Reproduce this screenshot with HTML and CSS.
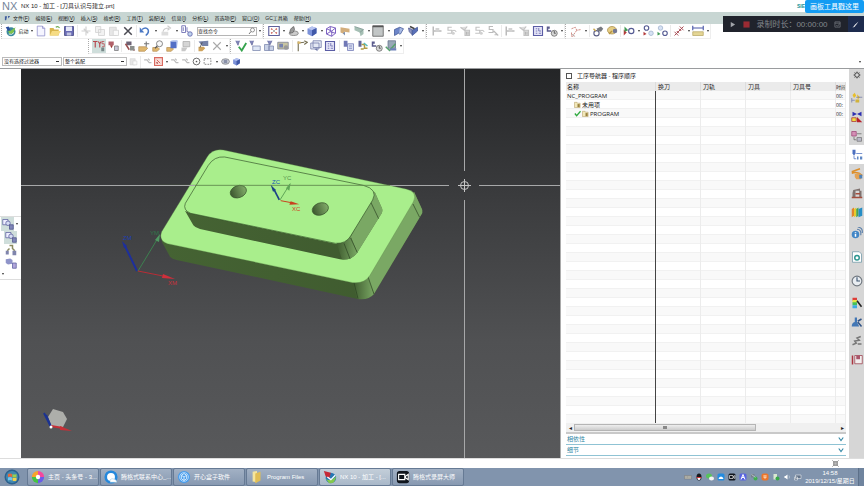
FILE: index.html
```html
<!DOCTYPE html>
<html lang="zh-CN">
<head>
  <meta charset="UTF-8">
  <meta name="viewport" content="width=device-width, initial-scale=1.0">
  <title>NX 10 - 加工 - [刀具认识与建立.prt]</title>
  <link rel="stylesheet" href="styles.css">
</head>
<body>
  <svg class="defs" aria-hidden="true">
    <symbol id="i-start" viewBox="0 0 16 16"><circle cx="8" cy="9" r="6" fill="#3d8a9c"/><path d="M3 5l4 3 7-5-3 8-5 1z" fill="#7fc34a"/><path d="M1 3l4-1 2 5-3 1z" fill="#2c4f9e"/><path d="M5 12q4 2 7-2" stroke="#fff" fill="none"/></symbol>
    <symbol id="i-new" viewBox="0 0 16 16"><path d="M3 1.500h7l3 3v10H3z" fill="#f5f5ff" stroke="#8c8cc8"/><path d="M10 1.500v3h3" fill="none" stroke="#8c8cc8"/></symbol>
    <symbol id="i-open" viewBox="0 0 16 16"><path d="M1 4h5l1 2h6v8H1z" fill="#d8b54e"/><path d="M4 8h12l-4 6H1z" fill="#f6dc84"/><path d="M9 3q3-2 5 1" stroke="#6aa84f" fill="none" stroke-width="1.500"/></symbol>
    <symbol id="i-save" viewBox="0 0 16 16"><path d="M2 2h12v12H2z" fill="#6a6cb5" stroke="#40427f"/><path d="M4 2h8v6H4z" fill="#e8eaf8"/><path d="M5 10h6v4H5z" fill="#c0c3e0"/></symbol>
    <symbol id="i-cut" viewBox="0 0 16 16"><path d="M8 2v12M2 8h12M5 5l6 6" stroke="#d0d0d0" stroke-width="1.500" fill="none"/></symbol>
    <symbol id="i-copy" viewBox="0 0 16 16"><path d="M2 2h7v8H2zM6 6h8v8H6z" fill="#f2f2f2" stroke="#d0d0d0"/></symbol>
    <symbol id="i-paste" viewBox="0 0 16 16"><path d="M2 3h9v11H2z" fill="#e6e6e6" stroke="#d0d0d0"/><path d="M7 7h7v7H7z" fill="#fafafa" stroke="#d0d0d0"/></symbol>
    <symbol id="i-x" viewBox="0 0 16 16"><path d="M3 3l10 10M13 3L3 13" stroke="#4a4a52" stroke-width="2"/></symbol>
    <symbol id="i-xg" viewBox="0 0 16 16"><path d="M3 3l10 10M13 3L3 13" stroke="#a9a9a9" stroke-width="1.500"/></symbol>
    <symbol id="i-undo" viewBox="0 0 16 16"><path d="M4 6q5-4 8 0 2 4-3 8" stroke="#4a78c4" stroke-width="2" fill="none"/><path d="M1 3v7h6z" fill="#4a78c4"/></symbol>
    <symbol id="i-redo" viewBox="0 0 16 16"><path d="M2 9h9v5H2z" fill="#ddd"/><path d="M4 9q1-5 8-5M10 1l4 3-4 3" stroke="#ccc" fill="none" stroke-width="1.500"/></symbol>
    <symbol id="i-info" viewBox="0 0 16 16"><path d="M1 1h5v9H1z" fill="#fff" stroke="#5557a5"/><path d="M3 3v5M8 3v6h2" stroke="#5557a5" fill="none"/><circle cx="12" cy="12" r="3" fill="#bfd4ee" stroke="#5557a5"/></symbol>
    <symbol id="i-fit" viewBox="0 0 16 16"><path d="M1 2h14v12H1z" fill="#fff" stroke="#60619c" stroke-width="1.500"/><path d="M4 5l2 1M12 5l-2 1M4 11l2-1M12 11l-2-1" stroke="#c0392b" stroke-width="1.500"/><path d="M7 7h2v2H7z" fill="#777"/></symbol>
    <symbol id="i-pan" viewBox="0 0 16 16"><ellipse cx="9" cy="11" rx="6" ry="3" fill="#ccc" stroke="#777"/><path d="M4 11q-1-6 5-9l1 4-2 4z" fill="#999" stroke="#666"/></symbol>
    <symbol id="i-cube" viewBox="0 0 16 16"><path d="M2 5l6-3 6 2v7l-6 4-6-3z" fill="#7c92d9"/><path d="M2 5l6-3 6 2-6 3z" fill="#b7c4f0"/><path d="M8 7l6-3v7l-6 4z" fill="#4159a8"/></symbol>
    <symbol id="i-wire" viewBox="0 0 16 16"><path d="M2 5l5-3 7 2v7l-5 4-7-3zM2 5l7 3 5-4M9 8v7M7 2v7l-5 3M7 9l7 2" fill="none" stroke="#7a5fc0" stroke-width="1.300"/></symbol>
    <symbol id="i-wall" viewBox="0 0 16 16"><path d="M2 3l12 2v5l-7-1v3l-5-2z" fill="#d3ae7c"/><path d="M8 9v5l-3-3z" fill="#7c8fb0"/></symbol>
    <symbol id="i-wall2" viewBox="0 0 16 16"><path d="M2 2l12 4v6l-4 3-1-5-7-3z" fill="#a5bfb4"/><path d="M2 2l12 4-5 4" fill="none" stroke="#7b948f"/></symbol>
    <symbol id="i-sheet" viewBox="0 0 16 16"><path d="M1 1h14v14H1z" fill="#c2c6c6" stroke="#555"/><path d="M1 2h14" stroke="#555" stroke-width="2"/></symbol>
    <symbol id="i-face" viewBox="0 0 16 16"><path d="M2 6l7-3v7l-7 4z" fill="#6d86c9" stroke="#3f5596"/><path d="M9 3l5 2-4 7-2 0" fill="#a9bbe5" stroke="#3f5596"/></symbol>
    <symbol id="i-face2" viewBox="0 0 16 16"><path d="M2 4l5 2v7L3 9z" fill="#8b93c0" stroke="#4e568f"/><path d="M7 7l7-4v5l-7 6z" fill="#5a70b8" stroke="#3f5596"/><path d="M4 2l6 3" stroke="#444" stroke-width="2"/></symbol>
    <symbol id="i-g1" viewBox="0 0 16 16"><path d="M3 2v12M3 8h11" stroke="#bbb" stroke-width="2"/><path d="M6 4h5v5H6z" fill="#d3d3d3"/></symbol>
    <symbol id="i-g2" viewBox="0 0 16 16"><path d="M9 3H4v4h5v4H3M9 9q3-4 6 0" stroke="#c2c2c2" stroke-width="1.500" fill="none"/><circle cx="11" cy="11" r="2" fill="#d0d0d0"/></symbol>
    <symbol id="i-g3" viewBox="0 0 16 16"><path d="M2 3l5 4 4-5M8 7h6v7H8z" stroke="#c2c2c2" stroke-width="1.500" fill="#ddd"/><path d="M10 9v4M12 9v4" stroke="#aaa"/></symbol>
    <symbol id="i-g4" viewBox="0 0 16 16"><path d="M8 2H3v4h5v4H2M9 8l6 6M10 13h5" stroke="#bbb" stroke-width="1.500" fill="none"/></symbol>
    <symbol id="i-list" viewBox="0 0 16 16"><path d="M2 2h12v12H2z" fill="#e4e4f7" stroke="#5b5da5" stroke-width="1.500"/><path d="M5 5h2M5 8h2M5 11h2M9 4v4h3M9 11h3" stroke="#5b5da5" fill="none"/></symbol>
    <symbol id="i-clock" viewBox="0 0 16 16"><path d="M2 2v6h5M4 2v3" stroke="#5a5b8c" stroke-width="2" fill="none"/><circle cx="11" cy="11" r="4" fill="#d5d5d5" stroke="#666"/><path d="M11 8v3h2" stroke="#333" fill="none"/></symbol>
    <symbol id="i-csys" viewBox="0 0 16 16"><path d="M2 5l5-2 2 4 6-1M9 7l-5 7M2 10v5h4" fill="none" stroke="#c36b62" stroke-dasharray="3 1"/><path d="M3 12l3 3" stroke="#888"/></symbol>
    <symbol id="i-link" viewBox="0 0 16 16"><circle cx="6" cy="11" r="3.500" fill="#fff" stroke="#5d6087" stroke-width="1.500"/><path d="M6 5l6-3 3 3-3 4-4-1z" fill="#777a80"/><path d="M2 5l3 3" stroke="#c9a94c" stroke-width="2"/></symbol>
    <symbol id="i-palette" viewBox="0 0 16 16"><ellipse cx="8" cy="7" rx="6" ry="5" fill="#e5cd84" stroke="#a98e49"/><circle cx="12" cy="8" r="3" fill="#747894"/><path d="M4 12l4-4" stroke="#b59242" stroke-width="2"/></symbol>
    <symbol id="i-move" viewBox="0 0 16 16"><path d="M1 6v8l4-4z" fill="#b43a3a"/><path d="M2 2l5 5-5 2z" fill="#419a55"/><circle cx="11" cy="8" r="3.500" fill="#fff" stroke="#545a92" stroke-width="1.500"/></symbol>
    <symbol id="i-move2" viewBox="0 0 16 16"><circle cx="6" cy="4" r="3" fill="#fff" stroke="#545a92" stroke-width="1.500"/><circle cx="12" cy="11" r="3" fill="#d7e2f4" stroke="#9fb2cc"/><path d="M2 9v5l4-2z" fill="#b43a3a"/></symbol>
    <symbol id="i-move3" viewBox="0 0 16 16"><circle cx="6" cy="4" r="3" fill="#d7e2f4" stroke="#9fb2cc"/><circle cx="12" cy="11" r="3" fill="#fff" stroke="#545a92" stroke-width="1.500"/><path d="M2 9v5l4-2z" fill="#419a55"/></symbol>
    <symbol id="i-measure" viewBox="0 0 16 16"><path d="M2 14L14 2M2 9l5 5M9 2l5 5M5 8l3 3M8 5l3 3" stroke="#a84a52" stroke-width="1.300"/></symbol>
    <symbol id="i-ruler" viewBox="0 0 16 16"><path d="M1 4h14M1 1v6M15 1v6" stroke="#4b57a8" stroke-width="1.500"/><path d="M1 9h14v5H1z" fill="#e4d695" stroke="#b8a866"/></symbol>
    <symbol id="i-tys" viewBox="0 0 16 16"><path d="M0 2h6M3 2v8M7 2l2 3 2-3M9 5v5" stroke="#b8454c" stroke-width="1.500" fill="none"/><path d="M15 2h-3v3h3v4h-3" stroke="#b8454c" fill="none"/><path d="M11 10h4v5h-4z" fill="#788"/></symbol>
    <symbol id="i-tool" viewBox="0 0 16 16"><path d="M2 2h7v5H2z" fill="#b0606a"/><path d="M4 7h4l-2 4z" fill="#933"/><path d="M10 8h5v6h-5z" fill="#c7c7d8" stroke="#777"/></symbol>
    <symbol id="i-tool2" viewBox="0 0 16 16"><path d="M3 2h7v5H3z" fill="#6d6274"/><path d="M2 5l5 8M9 9l5 5" stroke="#9a4f4f" stroke-width="2"/><path d="M8 8h6v6H8z" fill="#8c8f8c"/></symbol>
    <symbol id="i-hand" viewBox="0 0 16 16"><path d="M1 9h9l3 2-4 4H1z" fill="#dfb76e" stroke="#b8935a"/><path d="M8 5h7M11 2v7" stroke="#777" stroke-width="1.500"/></symbol>
    <symbol id="i-hand2" viewBox="0 0 16 16"><path d="M1 10h7l2 2-3 3H1z" fill="#dfb76e" stroke="#b8935a"/><circle cx="10" cy="5" r="4" fill="#f8f8f8" stroke="#666"/><path d="M7 8l-3 3" stroke="#555" stroke-width="1.500"/></symbol>
    <symbol id="i-hand3" viewBox="0 0 16 16"><path d="M1 10h7l2 2-3 3H1z" fill="#dfb76e" stroke="#b8935a"/><path d="M6 2h8v9H6z" fill="#536fc6"/><path d="M6 2l3-1h6l-1 9" fill="none" stroke="#8ea4e4"/></symbol>
    <symbol id="i-hand4" viewBox="0 0 16 16"><path d="M4 2h9v7H4z" fill="#d5d5d5" stroke="#aaa"/><path d="M2 10h8l-3 5H2z" fill="#c8c8c8"/></symbol>
    <symbol id="i-hand5" viewBox="0 0 16 16"><path d="M2 2l13-1v7H7z" fill="#7682a8"/><path d="M2 9h7l2 2-4 4H2z" fill="#cfa35c"/><path d="M7 3l-3 7" stroke="#444"/></symbol>
    <symbol id="i-ok" viewBox="0 0 16 16"><path d="M1 1l3 6 2-6" fill="#8388bb" stroke="#656b9f"/><path d="M5 9l4 5 6-10" fill="none" stroke="#35a34d" stroke-width="2.500"/></symbol>
    <symbol id="i-op" viewBox="0 0 16 16"><path d="M1 1l3 6 2-6" fill="#8388bb" stroke="#656b9f"/><path d="M5 8h10v6H5z" fill="#dfe7f5" stroke="#7b87ad"/></symbol>
    <symbol id="i-op2" viewBox="0 0 16 16"><path d="M6 1l3 6 3-6" fill="#8388bb" stroke="#656b9f"/><path d="M2 6h6v8H2zM8 8h6v6H8z" fill="#c8d1e6" stroke="#7b87ad"/></symbol>
    <symbol id="i-op3" viewBox="0 0 16 16"><path d="M1 3h14v9H1z" fill="#c7c4a2" stroke="#777b93"/><path d="M3 5h5v5H3z" fill="#7682b0"/><circle cx="12" cy="10" r="3" fill="#999"/></symbol>
    <symbol id="i-flag" viewBox="0 0 16 16"><path d="M3 15V2M3 4l8-1M11 1l4 2-4 3" stroke="#777155" fill="none" stroke-width="1.500"/><path d="M2 2h4v3H2z" fill="#d9b768"/></symbol>
    <symbol id="i-screen" viewBox="0 0 16 16"><path d="M4 1h11v9H4zM1 4h11v8H1z" fill="#e4e8f4" stroke="#7079a8"/><path d="M6 12l4 3v-4" fill="#7079a8"/></symbol>
    <symbol id="i-tree" viewBox="0 0 16 16"><path d="M1 1h5v8H1z" fill="#7078b6"/><path d="M6 5h8v9H6z" fill="#d8def0" stroke="#7078b6"/><path d="M8 8h4M8 11h4" stroke="#7078b6"/></symbol>
    <symbol id="i-tree2" viewBox="0 0 16 16"><path d="M2 1h4v8H2z" fill="#62679c"/><path d="M6 6h4v5h4M5 12h4" stroke="#b09a45" stroke-width="2" fill="none"/><path d="M9 4l5 4" stroke="#5bb" stroke-width="2"/></symbol>
    <symbol id="i-disk" viewBox="0 0 16 16"><path d="M4 1h10v10H4z" fill="#97a7b7" stroke="#67718c"/><path d="M1 9l5 5 8-9" fill="none" stroke="#57a06e" stroke-width="2"/><path d="M7 11h8v3H7z" fill="#6c80b9"/></symbol>
    <symbol id="i-snap" viewBox="0 0 16 16"><path d="M2 5h5l4 5h4M9 3l3 3" stroke="#bbb" stroke-width="2" fill="none"/></symbol>
    <symbol id="i-red" viewBox="0 0 16 16"><path d="M1 1h14v14H1z" fill="#f8dcd8" stroke="#d9695f" stroke-width="2"/><path d="M5 5l6 6M5 9v2h2" stroke="#cc4e43" stroke-width="1.500"/></symbol>
    <symbol id="i-target" viewBox="0 0 16 16"><circle cx="8" cy="8" r="6" fill="none" stroke="#555" stroke-width="1.500"/><circle cx="8" cy="8" r="1.500" fill="#555"/></symbol>
    <symbol id="i-dash" viewBox="0 0 16 16"><path d="M2 3h12v10H2z" fill="none" stroke="#777" stroke-width="1.500" stroke-dasharray="3 2"/></symbol>
    <symbol id="i-eye" viewBox="0 0 16 16"><ellipse cx="8" cy="8" rx="7" ry="5" fill="#c7cbd6" stroke="#666"/><path d="M5 5h6v6H5z" fill="#8990a8"/></symbol>
    <symbol id="i-nav" viewBox="0 0 16 16"><path d="M1 2h7v7H1z" fill="#eef" stroke="#5b5f9d"/><circle cx="8" cy="7" r="3" fill="#d6dcf3" stroke="#5b5f9d"/><path d="M10 9h5v6h-5z" fill="#8086b8" stroke="#4e528a"/></symbol>
    <symbol id="i-nav2" viewBox="0 0 16 16"><path d="M6 2h4v4l3 3M6 6L3 9" fill="none" stroke="#8a8a60" stroke-width="2"/><path d="M1 9h4v5H1zM10 9h5v6h-5z" fill="#7f84ac"/></symbol>
    <symbol id="i-nav3" viewBox="0 0 16 16"><path d="M1 3l6-1 3 2v5l-6 1-3-2z" fill="#8f94c9"/><path d="M10 8h5v7h-5z" fill="#b0a5db" stroke="#5b5f9d"/></symbol>
    <symbol id="i-gear" viewBox="0 0 16 16"><circle cx="8" cy="8" r="4.500" fill="none" stroke="#4a4a4a" stroke-width="2"/><path d="M8 1v3M8 12v3M1 8h3M12 8h3M3 3l2 2M11 11l2 2M13 3l-2 2M3 13l2-2" stroke="#4a4a4a" stroke-width="1.500"/></symbol>
    <symbol id="r-asm" viewBox="0 0 16 16"><path d="M2 4l3-3 2 4-3 3zM8 3l4 4-3 3z" fill="#e7be2b"/><path d="M1 8v6M1 11h4M7 7h8" stroke="#7279a8" fill="none"/><path d="M6 10h5v4H6z" fill="#d1b33b"/></symbol>
    <symbol id="r-con" viewBox="0 0 16 16"><path d="M2 1l6 3 6-3v6L8 4 2 7z" fill="#2e30b2"/><path d="M1 9h6v5H1z" fill="#f2dd41" stroke="#a33"/><path d="M8 8l7 7H8z" fill="#b7202a"/></symbol>
    <symbol id="r-part" viewBox="0 0 16 16"><path d="M1 2h6v6H1z" fill="#d48fb6" stroke="#9c4777"/><path d="M8 5h6M4 9v4h3" stroke="#666" fill="none"/><path d="M8 10h6v5H8z" fill="#b9b9c9" stroke="#777"/></symbol>
    <symbol id="r-op" viewBox="0 0 16 16"><path d="M2 1h4v5l-2 3-2-3z" fill="#4d70c0"/><path d="M7 6h8M4 9v4h3" stroke="#4d70c0" fill="none"/><path d="M8 10h2v4H8zM12 10h3v4h-3z" fill="#5f87c4"/></symbol>
    <symbol id="r-mach" viewBox="0 0 16 16"><path d="M1 5l11-4M1 7q8-3 14 3" stroke="#dd8e29" stroke-width="2" fill="none"/><path d="M5 8l6-1 4 3-2 5H7l-2-3z" fill="#e3a355"/><path d="M11 9h4v5h-4z" fill="#5082b8"/></symbol>
    <symbol id="r-mill" viewBox="0 0 16 16"><path d="M3 4l9-2v3H6v9H2V8zM11 5h3v9h-3z" fill="#7f726f"/><path d="M6 9h6M1 14h14" stroke="#a54d3c" stroke-width="2"/></symbol>
    <symbol id="r-book" viewBox="0 0 16 16"><path d="M1 4l3-2v11l-3 2z" fill="#e0852c"/><path d="M4 4l3-2v11l-3 2z" fill="#e8ca2e"/><path d="M7 4l3-2v11l-3 2z" fill="#4aa44d"/><path d="M10 4l5-2v11l-5 2z" fill="#278ec6"/></symbol>
    <symbol id="r-web" viewBox="0 0 16 16"><circle cx="6" cy="10" r="5" fill="#4286c6"/><path d="M6 7v1M6 9v4" stroke="#fff" stroke-width="2"/><path d="M8 3q6 0 5 8M9 0q7 1 6 8" fill="none" stroke="#5c80aa" stroke-width="1.500"/></symbol>
    <symbol id="r-doc" viewBox="0 0 16 16"><path d="M2 1h9l3 3v11H2z" fill="#fff" stroke="#6d97a5"/><circle cx="8" cy="9" r="3" fill="none" stroke="#2d9690" stroke-width="2"/></symbol>
    <symbol id="r-hist" viewBox="0 0 16 16"><circle cx="8" cy="8" r="6.500" fill="#e9edf1" stroke="#70777f" stroke-width="1.500"/><path d="M8 3v5h4" fill="none" stroke="#3f5671" stroke-width="1.500"/></symbol>
    <symbol id="r-color" viewBox="0 0 16 16"><path d="M2 1h6v4H2z" fill="#de3e37"/><path d="M2 4h6v4H2z" fill="#e6e443"/><path d="M2 7h6v4H2z" fill="#45c05b"/><path d="M2 11h6v4H2z" fill="#3dabe3"/><path d="M8 5l6 8" stroke="#222" stroke-width="2"/></symbol>
    <symbol id="r-role" viewBox="0 0 16 16"><path d="M1 14q0-5 4-6V2h3v6l3 6z" fill="#4377b5"/><path d="M9 7l5-3M9 8l5 6" stroke="#315488" stroke-width="2"/></symbol>
    <symbol id="r-chain" viewBox="0 0 16 16"><path d="M13 2L8 4l3 3-6 1 2 3-5 2M9 12h5" fill="none" stroke="#777" stroke-width="2"/></symbol>
    <symbol id="r-tmpl" viewBox="0 0 16 16"><path d="M2 2v12" stroke="#ad3540" stroke-width="2"/><path d="M5 2h10v11H5z" fill="#f2eeee" stroke="#9b3f4c"/><path d="M7 2h5v5H7z" fill="#a9556a"/></symbol>
    <symbol id="i-folder" viewBox="0 0 16 16"><path d="M1 3h6l1 2h6v10H1z" fill="#f2e8b9" stroke="#a2874b"/><path d="M8 7h5v7H8z" fill="#98813e"/></symbol>
  </svg>

  <header class="title">
    <b class="nx">NX</b>
    <span>NX 10 - 加工 - [刀具认识与建立.prt]</span>
    <b class="brand">SIE</b>
  </header>

  <nav class="menu">
    <svg viewBox="0 0 16 16"><path d="M2 3h5l-2 9H2zM9 2h5l-4 6z" fill="#3f5c9d"/></svg>
    <button>文件(<u>F</u>)</button>
    <button>编辑(<u>E</u>)</button>
    <button>视图(<u>V</u>)</button>
    <button>插入(<u>S</u>)</button>
    <button>格式(<u>R</u>)</button>
    <button>工具(<u>T</u>)</button>
    <button>装配(<u>A</u>)</button>
    <button>信息(<u>I</u>)</button>
    <button>分析(<u>L</u>)</button>
    <button>首选项(<u>P</u>)</button>
    <button>窗口(<u>O</u>)</button>
    <button>GC工具箱</button>
    <button>帮助(<u>H</u>)</button>
  </nav>

  <div class="bars">
    <div class="bar bar-main">
      <div class="group">
        <button class="launch"><svg><use href="#i-start"/></svg>启动</button><button class="dd" aria-label="启动菜单"></button>
        <button title="新建"><svg><use href="#i-new"/></svg></button>
        <button title="打开"><svg><use href="#i-open"/></svg></button>
        <button title="保存"><svg><use href="#i-save"/></svg></button>
        <i class="sep"></i>
        <button title="剪切"><svg><use href="#i-cut"/></svg></button>
        <button title="复制"><svg><use href="#i-copy"/></svg></button>
        <button title="粘贴"><svg><use href="#i-paste"/></svg></button>
        <button title="删除"><svg><use href="#i-x"/></svg></button>
        <i class="sep"></i>
        <button title="撤消"><svg><use href="#i-undo"/></svg></button><button class="dd wide" aria-label="撤消列表"></button>
        <button title="重做"><svg><use href="#i-redo"/></svg></button><button class="dd wide" aria-label="重做列表"></button>
        <button title="命令信息"><svg><use href="#i-info"/></svg></button>
        <label class="finder">
          <input type="text" value="查找命令" aria-label="查找命令">
          <svg viewBox="0 0 16 16"><circle cx="9" cy="6" r="4" fill="none" stroke="#777" stroke-width="1.500"/><path d="M6 9l-4 5" stroke="#777" stroke-width="2"/></svg>
        </label><button class="dd" aria-label="工具条选项"></button>
      </div>
      <div class="group">
        <button title="适合窗口"><svg><use href="#i-fit"/></svg></button><button class="dd" aria-label="视图操作"></button>
        <button title="旋转"><svg><use href="#i-pan"/></svg></button><button class="dd" aria-label="方位"></button>
        <button title="带边着色"><svg><use href="#i-cube"/></svg></button><button class="dd" aria-label="渲染样式"></button>
        <button title="线框"><svg><use href="#i-wire"/></svg></button>
        <button title="剖切"><svg><use href="#i-wall"/></svg></button>
        <button title="编辑截面"><svg><use href="#i-wall2"/></svg></button><button class="dd" aria-label="截面"></button>
        <button title="背景"><svg><use href="#i-sheet"/></svg></button><button class="dd wide" aria-label="背景颜色"></button>
        <button title="显示"><svg><use href="#i-face"/></svg></button>
        <button title="隐藏"><svg><use href="#i-face2"/></svg></button><button class="dd" aria-label="显示选项"></button>
      </div>
      <div class="group">
        <button title="生成刀轨"><svg><use href="#i-g1"/></svg></button>
        <button title="平行生成"><svg><use href="#i-g2"/></svg></button>
        <button title="确认刀轨"><svg><use href="#i-g3"/></svg></button>
        <button title="列出刀轨"><svg><use href="#i-g2"/></svg></button>
        <button title="过切检查"><svg><use href="#i-g4"/></svg></button>
        <i class="sep"></i>
        <button title="机床仿真"><svg><use href="#i-g1"/></svg></button>
        <button title="后处理"><svg><use href="#i-g3"/></svg></button>
        <button title="车间文档"><svg><use href="#i-list"/></svg></button>
        <button title="加工时间"><svg><use href="#i-clock"/></svg></button><button class="dd" aria-label="更多工序"></button>
      </div>
      <div class="group">
        <button title="坐标系"><svg><use href="#i-csys"/></svg></button><button class="dd" aria-label="坐标系选项"></button>
        <i class="sep"></i>
        <button title="对象显示"><svg><use href="#i-link"/></svg></button>
        <button title="颜色"><svg><use href="#i-palette"/></svg></button>
        <i class="sep"></i>
        <button title="移动对象"><svg><use href="#i-move"/></svg></button><button class="dd" aria-label="移动选项"></button>
        <button title="变换"><svg><use href="#i-move2"/></svg></button>
        <button title="阵列"><svg><use href="#i-move3"/></svg></button>
        <i class="sep"></i>
        <button title="测量距离"><svg><use href="#i-measure"/></svg></button><button class="dd" aria-label="测量选项"></button>
        <button title="尺寸"><svg><use href="#i-ruler"/></svg></button><button class="dd" aria-label="尺寸选项"></button>
      </div>
    </div>

    <div class="bar bar-cam">
      <div class="group">
        <button class="on" title="创建程序"><svg><use href="#i-tys"/></svg></button>
        <button title="创建刀具"><svg><use href="#i-tool"/></svg></button>
        <i class="sep"></i>
        <button title="创建工序"><svg><use href="#i-tool2"/></svg></button>
        <button title="创建几何体"><svg><use href="#i-hand"/></svg></button>
        <button title="查找对象"><svg><use href="#i-hand2"/></svg></button>
        <button title="创建方法"><svg><use href="#i-hand3"/></svg></button>
        <button title="属性"><svg><use href="#i-hand4"/></svg></button>
        <i class="sep"></i>
        <button title="编辑对象"><svg><use href="#i-hand5"/></svg></button>
        <button title="删除对象"><svg><use href="#i-xg"/></svg></button><button class="dd" aria-label="更多对象"></button>
      </div>
      <div class="group views">
        <button title="校验"><svg><use href="#i-ok"/></svg></button>
        <button title="编辑刀轨"><svg><use href="#i-op"/></svg></button>
        <button title="复制刀轨"><svg><use href="#i-op2"/></svg></button>
        <button title="仿真"><svg><use href="#i-op3"/></svg></button>
        <i class="sep"></i>
        <button title="开始事件"><svg><use href="#i-flag"/></svg></button>
        <button title="显示刀轨"><svg><use href="#i-screen"/></svg></button>
        <button title="列表"><svg><use href="#i-list"/></svg></button>
        <i class="sep"></i>
        <button title="程序顺序视图"><svg><use href="#i-tree"/></svg></button>
        <button title="机床视图"><svg><use href="#i-tree2"/></svg></button>
        <button title="几何视图"><svg><use href="#i-clock"/></svg></button>
        <button title="加工方法视图"><svg><use href="#i-disk"/></svg></button><button class="dd" aria-label="更多视图"></button>
      </div>
    </div>

    <div class="bar bar-select">
      <select class="filter" aria-label="选择过滤器"><option>没有选择过滤器</option></select>
      <select class="scope" aria-label="选择范围"><option>整个装配</option></select>
      <button title="重置"><svg><use href="#i-paste"/></svg></button>
      <i class="sep"></i>
      <button title="捕捉端点"><svg><use href="#i-snap"/></svg></button>
      <button title="捕捉中点"><svg><use href="#i-red"/></svg></button><button class="dd" aria-label="捕捉选项"></button>
      <button title="曲线上点"><svg><use href="#i-snap"/></svg></button>
      <button title="交点"><svg><use href="#i-snap"/></svg></button>
      <button title="圆心"><svg><use href="#i-target"/></svg></button>
      <button title="矩形选择"><svg><use href="#i-dash"/></svg></button><button class="dd wide" aria-label="选择方式"></button>
      <button title="可见性"><svg><use href="#i-eye"/></svg></button>
      <button title="着色"><svg><use href="#i-cube"/></svg></button>
      <button class="dd more" aria-label="选择条选项"></button>
    </div>
  </div>

  <main class="work">
    <aside class="dock">
      <div class="dock-box">
        <div class="dock-top"><button class="on" title="程序顺序视图"><svg><use href="#i-nav"/></svg></button><button class="dd" aria-label="导航器视图"></button></div>
        <button class="on" title="机床视图"><svg><use href="#i-nav"/></svg></button>
        <button title="几何视图"><svg><use href="#i-nav2"/></svg></button>
        <button title="加工方法视图"><svg><use href="#i-nav3"/></svg></button>
        <button class="dd" aria-label="更多"></button>
      </div>
    </aside>

    <section class="scene">
      <svg viewBox="0 0 539 389" preserveAspectRatio="xMinYMin slice">
        <defs>
          <linearGradient id="front" x1="0" y1="0" x2="1" y2="0"><stop offset="0" stop-color="#456333"/><stop offset=".88" stop-color="#3f5b2f"/><stop offset="1" stop-color="#638a4c"/></linearGradient>
          <linearGradient id="round" x1="0" y1="0" x2="1" y2="0"><stop offset="0" stop-color="#3f5b2f"/><stop offset="1" stop-color="#7aa864"/></linearGradient>
          <linearGradient id="hole" x1="0" y1="0" x2="1" y2="0"><stop offset="0" stop-color="#3b552e"/><stop offset="1" stop-color="#83ad6a"/></linearGradient>
        </defs>
        <path class="cross" d="M0 116.500H428M458 116.500H539M443.500 0V102M443.500 131V389"/>
        <!-- plate: drawn at 3x and scaled down -->
        <g transform="translate(129 71) scale(.3333)">
          <path d="M33 290L36 306 60 350Q66 357 80 360L620 476Q655 482 672 462L816 220V208L792 155 655 415 50 308z" fill="url(#front)"/>
          <path d="M792 155L817 210V219L672 462 652 416z" fill="#7aa864"/>
          <path d="M608 428L622 477Q655 482 672 462L652 408z" fill="url(#round)"/>
          <path d="M789 192L809 232M654 410l18 52M612 428l12 48" stroke="#29401f" stroke-width="2" fill="none"/>
          <path d="M35 275L172 50Q188 25 220 30L768 147Q805 155 790 186L660 406Q644 432 608 428L52 311Q25 302 35 275z" fill="#a9ee8c" stroke="#547b43" stroke-width="1"/>
          <path d="M105 212L130 256Q136 264 150 267L570 358Q604 362 620 340L692 225Q700 215 696 205L674 155 560 312 118 218z" fill="url(#front)"/>
          <path d="M674 155L696 205Q700 215 692 225L622 338 602 290z" fill="#7aa864"/>
          <path d="M560 310L576 358Q604 362 622 338L602 288z" fill="url(#round)"/>
          <path d="M662 186l24 50M602 294l20 44M582 310l18 46" stroke="#29401f" stroke-width="2" fill="none"/>
          <path d="M106 190L175 76Q193 48 224 51L640 136Q685 148 668 180L602 288Q588 312 556 310L122 220Q98 210 106 190z" fill="#a9ee8c" stroke="#345128" stroke-width="2"/>
          <ellipse cx="265" cy="155" rx="25" ry="18" transform="rotate(-20 265 155)" fill="url(#hole)" stroke="#35502a" stroke-width="2"/>
          <ellipse cx="511" cy="207" rx="25" ry="18" transform="rotate(-20 511 207)" fill="url(#hole)" stroke="#35502a" stroke-width="2"/>
          <path d="M0 136H720" stroke="#5b8048" stroke-width="3" opacity=".8"/>
          <path d="M388 180L372 148" stroke="#1c4386" stroke-width="5"/><path d="M362 134l16 16-9 5z" fill="#1c4386"/>
          <path d="M390 180L420 132" stroke="#5fa657" stroke-width="3"/><path d="M422 128l-4 24-10-7z" fill="#5fa657"/>
          <path d="M392 182L424 188" stroke="#c8421e" stroke-width="3"/><path d="M448 193l-30 1 4-10z" fill="#c8421e"/>
        </g>
        <path class="cross" d="M0 116.500H174"/>
        <g class="axis">
          <text x="251" y="115" fill="#1559b4">ZC</text>
          <text x="262" y="111" fill="#57924c">YC</text>
          <text x="271" y="142" fill="#cf4322">XC</text>
          <text x="102" y="171" fill="#203fb0">ZM</text>
          <text x="129" y="166" fill="#2f7a4a">YM</text>
          <text x="147" y="216" fill="#c8303c">XM</text>
        </g>
        <path d="M116 202L104 177" stroke="#1d2f9c" stroke-width="2"/><path d="M101 172l5 5-3 2z" fill="#1d2f9c"/>
        <path d="M117 202L137 169" stroke="#3d8150"/><path d="M139 165l-1 8-4-2z" fill="#4f9a62"/>
        <path d="M117 202L142 207" stroke="#b82c36"/><path d="M154 210l-13-1 1-4z" fill="#cf2f3b"/>
        <g fill="none" stroke="#c5c5c5"><circle cx="443.500" cy="116.500" r="4"/><path d="M437 116.500h13M443.500 110v13"/></g>
        <path d="M32 340l10 3 4 7-4 8-11 0-4-10z" fill="#adaeaa"/>
        <path d="M30 358l-7-14M25 346l5 12" stroke="#1b3292" stroke-width="2"/>
        <path d="M30 357l12 2" stroke="#c62f37" stroke-width="2"/><path d="M39 357l12 5-12-1z" fill="#c62f37"/><circle cx="30" cy="358" r="1.500" fill="#fff"/>
      </svg>
    </section>

    <section class="panel">
      <h2><i></i>工序导航器 - 程序顺序</h2>
      <div class="grid">
        <table>
          <thead>
            <tr><th class="name">名称</th><th>换刀</th><th>刀轨</th><th>刀具</th><th>刀具号</th><th class="time">时间</th></tr>
          </thead>
          <tbody>
            <tr><td class="name">NC_PROGRAM</td><td></td><td></td><td></td><td></td><td class="time">00:</td></tr>
            <tr><td class="name lv1"><svg><use href="#i-folder"/></svg>未用项</td><td></td><td></td><td></td><td></td><td class="time">00:</td></tr>
            <tr><td class="name lv2"><svg viewBox="0 0 16 16"><path d="M2 8l4 5 9-10" fill="none" stroke="#2faa3f" stroke-width="3"/></svg><svg><use href="#i-folder"/></svg>PROGRAM</td><td></td><td></td><td></td><td></td><td class="time">00:</td></tr>
            <tr class="rest"><td class="name"></td><td></td><td></td><td></td><td></td><td></td></tr>
          </tbody>
        </table>
      </div>
      <div class="scroll"><button aria-label="向左">◂</button><span class="thumb"></span><button aria-label="向右">▸</button></div>
      <button class="fold">相依性<svg viewBox="0 0 8 8"><path d="M1 2l3 4 3-4" fill="none" stroke="#3488a6" stroke-width="1.500"/></svg></button>
      <button class="fold">细节<svg viewBox="0 0 8 8"><path d="M1 2l3 4 3-4" fill="none" stroke="#3488a6" stroke-width="1.500"/></svg></button>
    </section>

    <aside class="resource">
      <button class="gear" title="资源条选项"><svg><use href="#i-gear"/></svg></button>
      <button title="装配导航器"><svg><use href="#r-asm"/></svg></button>
      <button title="约束导航器"><svg><use href="#r-con"/></svg></button>
      <button title="部件导航器"><svg><use href="#r-part"/></svg></button>
      <button class="current" title="工序导航器"><svg><use href="#r-op"/></svg></button>
      <button title="加工特征导航器"><svg><use href="#r-mach"/></svg></button>
      <button title="机床导航器"><svg><use href="#r-mill"/></svg></button>
      <button title="重用库"><svg><use href="#r-book"/></svg></button>
      <button class="tall" title="HD3D 工具"><svg><use href="#r-web"/></svg></button>
      <button class="tall" title="Web 浏览器"><svg><use href="#r-doc"/></svg></button>
      <button class="tall" title="历史记录"><svg><use href="#r-hist"/></svg></button>
      <button title="系统材料"><svg><use href="#r-color"/></svg></button>
      <button title="角色"><svg><use href="#r-role"/></svg></button>
      <button title="加工向导"><svg><use href="#r-chain"/></svg></button>
      <button title="模板"><svg><use href="#r-tmpl"/></svg></button>
    </aside>
  </main>

  <div class="status">
    <button title="全屏"><svg viewBox="0 0 16 16"><path d="M4 4h8v8H4z" fill="#bbb" stroke="#777" stroke-width="2"/><path d="M1 1l3 3M15 1l-3 3M1 15l3-3M15 15l-3-3" stroke="#777" stroke-width="2"/></svg></button>
  </div>

  <footer class="taskbar">
    <button class="orb" aria-label="开始"><svg viewBox="0 0 16 16"><circle cx="8" cy="8" r="7.500" fill="#2b618f"/><circle cx="8" cy="8" r="6" fill="#4287ae"/><path d="M4 5q2-1 4 0v3q-2-1-4 0z" fill="#e5683c"/><path d="M8.500 5q2 1 4 0v3q-2 1-4 0z" fill="#9bd14c"/><path d="M4 8.500q2-1 4 0v3q-2-1-4 0z" fill="#6ec5f0"/><path d="M8.500 8.500q2 1 4 0v3q-2 1-4 0z" fill="#f6d04a"/></svg></button>
    <button class="task"><svg viewBox="0 0 16 16"><path d="M8 8V1a7 7 0 0 1 7 7z" fill="#f5479d"/><path d="M8 8h7a7 7 0 0 1-7 7z" fill="#6a5ee8"/><path d="M8 8v7a7 7 0 0 1-7-7z" fill="#44c443"/><path d="M8 8H1a7 7 0 0 1 7-7z" fill="#f8a32b"/><circle cx="8" cy="8" r="2.500" fill="#fff"/></svg><span>主页 - 头条号 - 3...</span></button>
    <button class="task"><svg viewBox="0 0 16 16"><circle cx="8" cy="8" r="6" fill="#fff" stroke="#2588dc" stroke-width="3"/><path d="M7 14q-1-4 3-4 4 0 5 4z" fill="#fff" stroke="#71afd9" stroke-width=".5"/></svg><span>腾格式联系中心_...</span></button>
    <button class="task"><svg viewBox="0 0 16 16"><circle cx="8" cy="8" r="7" fill="#4b9eeb"/><circle cx="8" cy="8" r="5" fill="none" stroke="#b6dcff"/><path d="M5 6l3-2 3 2v4l-3 2-3-2zM5 6l3 2 3-2M8 8v4" fill="none" stroke="#dff0ff"/></svg><span>开心盒子软件</span></button>
    <button class="task"><svg viewBox="0 0 16 16"><path d="M3 2l5-1v13l-5-1z" fill="#f5e59d"/><path d="M6 4l6-2v10l-6 3z" fill="#e0bd55"/></svg><span>Program Files</span></button>
    <button class="task active"><svg viewBox="0 0 16 16"><circle cx="9" cy="9" r="6" fill="#2576b4"/><path d="M3 10q5 4 12-3-1 9-8 8z" fill="#83c84d"/><path d="M1 1l8 2-2 7-4-3z" fill="#c52836"/><path d="M5 8l4 3 5-5" stroke="#fff" fill="none" stroke-width="1.500"/></svg><span>NX 10 - 加工 - [...</span></button>
    <button class="task"><svg viewBox="0 0 16 16"><rect x="1" y="1" width="14" height="14" rx="3" fill="#10151d"/><path d="M3 5h7v6H3zM11 7l3-2v6l-3-2z" fill="none" stroke="#fff" stroke-width="1.300"/></svg><span>腾格式录屏大师</span></button>
    <div class="tray">
      <svg viewBox="0 0 16 16"><path d="M1 5h14v7H1z" fill="#b8b8ae" stroke="#777"/><path d="M3 8h10" stroke="#666" stroke-dasharray="2 1"/></svg>
      <svg viewBox="0 0 16 16"><ellipse cx="8" cy="8" rx="5" ry="7" fill="#16181c"/><ellipse cx="8" cy="11" rx="3" ry="3" fill="#fff"/><path d="M3 9h10" stroke="#d3373a" stroke-width="2"/></svg>
      <svg viewBox="0 0 16 16"><ellipse cx="6" cy="6" rx="6" ry="5" fill="#57c35a"/><ellipse cx="11" cy="11" rx="5" ry="4" fill="#f2f2f2"/></svg>
      <svg viewBox="0 0 16 16"><rect x="1" y="1" width="14" height="14" rx="3" fill="#258ce0"/><path d="M3 12q1-5 5-5t5 5z" fill="#fff"/></svg>
      <svg viewBox="0 0 16 16"><rect x="1" y="1" width="14" height="14" rx="3" fill="#10151d"/><path d="M3 5h7v6H3zM11 7l3-2v6l-3-2z" fill="none" stroke="#fff" stroke-width="1.300"/></svg>
      <svg viewBox="0 0 16 16"><rect x="1" y="1" width="14" height="14" rx="3" fill="#5965e0"/><path d="M4 13l4-10 4 10M6 9h4" stroke="#fff" stroke-width="2" fill="none"/></svg>
      <svg viewBox="0 0 16 16"><path d="M2 2h7v7H2z" fill="#75828c"/><circle cx="11" cy="11" r="4" fill="#3fae4e"/><path d="M3 3l8 6" stroke="#fff"/></svg>
      <svg viewBox="0 0 16 16"><rect x="1" y="1" width="14" height="14" rx="4" fill="#ed762b"/><path d="M4 6h8M5 9h6M8 4v8" stroke="#ffdcbc" stroke-width="1.500"/></svg>
      <svg viewBox="0 0 16 16"><path d="M3 2h7v11H3z" fill="#d8e8d1"/><circle cx="11" cy="11" r="4" fill="#38a848"/></svg>
      <svg viewBox="0 0 16 16"><path d="M3 6h2l4-3v10l-4-3H3z" fill="#fff"/><path d="M12 5q2 3 0 6" fill="none" stroke="#dde4ec"/></svg>
      <svg viewBox="0 0 16 16"><path d="M3 4h11v7H3zM1 8h6v6H1z" fill="#63748a" stroke="#fff"/></svg>
    </div>
    <time datetime="2019-12-15T14:58">14:58<br>2019/12/15/星期日</time>
    <button class="desktop" aria-label="显示桌面"></button>
  </footer>

  <div class="recorder">
    <button aria-label="播放"><svg viewBox="0 0 16 16"><path d="M4 2l10 6-10 6z" fill="#a2a5aa"/></svg></button>
    <button aria-label="停止"><svg viewBox="0 0 16 16"><path d="M1 1h14v14H1z" fill="#9b2b33"/></svg></button>
    <span>录制时长：00:00:00</span>
    <button aria-label="设置"><svg viewBox="0 0 16 16"><path d="M2 2h12v12H2zM2 5h12M5 9l3 3 5-6" fill="none" stroke="#7c8087" stroke-width="1.500"/></svg></button>
    <button class="brush" aria-label="画板"><svg viewBox="0 0 16 16"><path d="M15 1L6 9l2 2z" fill="#fff"/><path d="M6 9l2 2q-2 4-7 4 3-2 5-6z" fill="#fff"/></svg></button>
  </div>
  <div class="tip">画板工具戳这里</div>
</body>
</html>
```

FILE: styles.css
```css
* {
  box-sizing: border-box;
}

body {
  margin: 0;
  height: 100vh;
  display: flex;
  flex-direction: column;
  overflow: hidden;
  background: #fff;
  color: #222;
  font-family: "Liberation Sans", "Noto Sans CJK SC", sans-serif;
  font-size: 6px;
  line-height: 9px;
}

button {
  margin: 0;
  padding: 0;
  border: 0;
  background: none;
  color: inherit;
  font: inherit;
  cursor: pointer;
}

svg {
  display: block;
  flex: none;
}

.defs {
  position: absolute;
  width: 0;
  height: 0;
}

/* title and menu */
.title {
  height: 12px;
  flex: none;
  display: flex;
  align-items: center;
  padding: 0 59px 0 2px;
}

.nx {
  width: 19px;
  color: #75859a;
  font-size: 11px;
  font-weight: normal;
}

.brand {
  margin-left: auto;
  color: #168f91;
  font-size: 5px;
}

.menu {
  height: 12px;
  flex: none;
  display: flex;
  align-items: center;
  gap: 6px;
  padding-left: 4px;
  background: #c8d6d3;
  font-size: 5px;
}

.menu svg {
  width: 7px;
  height: 7px;
  margin-right: -4px;
}

/* toolbars */
.bars {
  flex: none;
  height: 45px;
  border-bottom: 1px solid #9a9c9e;
}

.bar,
.group {
  display: flex;
  align-items: center;
}

.bar {
  height: 15px;
}

.group {
  height: 15px;
  padding-left: 3px;
  border-left: 1px dotted #aaa;
  border-right: 1px solid #eee;
  border-bottom: 1px solid #eee;
}

.bar-main {
  padding-left: 1px;
}

.bar-cam {
  padding-left: 88px;
}

.bar button:not(.dd) {
  width: 14px;
  height: 14px;
  flex: none;
  display: flex;
  align-items: center;
  justify-content: center;
}

.bar svg {
  width: 12px;
  height: 12px;
}

.bar .launch:not(.dd) {
  width: 24px;
  gap: 1px;
  font-size: 5px;
  white-space: nowrap;
}

.bar .on,
.dock .on {
  background: #cfdedb;
}

.dd {
  width: 5px;
  height: 10px;
  flex: none;
  display: flex;
  align-items: center;
  justify-content: center;
}

.dd::after {
  content: "";
  border: 1px solid transparent;
  border-top: 2px solid #333;
  border-bottom: 0;
}

.dd.wide {
  width: 7px;
}

.sep {
  width: 1px;
  height: 12px;
  margin: 0 1px;
  flex: none;
  background: #eaeaea;
}

.views .sep {
  margin: 0 2px;
}

.finder {
  width: 60px;
  height: 9px;
  margin-left: 3px;
  display: flex;
  align-items: center;
  border: 1px solid #b5b5b5;
}

.finder input {
  min-width: 0;
  flex: 1;
  padding: 0;
  border: 0;
  background: none;
  color: #222;
  font: inherit;
  font-size: 5px;
  line-height: 7px;
}

.finder svg {
  width: 8px;
  height: 8px;
}

.bar-select {
  padding-left: 2px;
}

.bar-select button:not(.dd) {
  width: 11px;
}

.bar-select svg {
  width: 9px;
  height: 9px;
}

.more {
  margin-left: auto;
  margin-right: 2px;
}

select {
  height: 9px;
  margin-right: 1px;
  padding: 0 0 0 1px;
  border: 1px solid #bbb;
  border-radius: 0;
  appearance: none;
  background: #fff linear-gradient(#333, #333) no-repeat right 2px center / 3px 1px;
  color: #222;
  font: inherit;
  font-size: 5px;
  line-height: 7px;
}

.filter {
  width: 60px;
}

.scope {
  width: 64px;
}

/* work area */
.work {
  flex: 1;
  min-height: 0;
  display: flex;
}

.dock {
  width: 21px;
  flex: none;
  padding-top: 147px;
}

.dock-box {
  height: 64px;
  display: flex;
  flex-direction: column;
  align-items: flex-start;
  border-top: 1px solid #ddd;
  border-bottom: 1px solid #ddd;
}

.dock-top {
  display: flex;
  align-items: center;
}

.dock-box button:not(.dd) {
  width: 13px;
  height: 14px;
  margin-left: 4px;
  display: flex;
  align-items: center;
  justify-content: center;
}

.dock-box .dock-top button:not(.dd) {
  margin-left: 1px;
}

.dock-box svg {
  width: 12px;
  height: 12px;
}

.scene {
  flex: 1;
  min-width: 0;
  background: linear-gradient(#242527, #3c3d3f 35%, #505153 70%, #58595b);
}

.scene > svg {
  width: 100%;
  height: 100%;
}

.axis {
  font-size: 6px;
}

.cross {
  fill: none;
  stroke: #a7a8a9;
}

.panel {
  width: 289px;
  flex: none;
  display: flex;
  flex-direction: column;
  padding: 1px 3px 2px 5px;
  border-left: 1px solid #aaa;
  font-family: "Open Sans", "Noto Sans CJK SC", sans-serif;
}

.panel h2 {
  height: 12px;
  flex: none;
  display: flex;
  align-items: center;
  gap: 5px;
  margin: 0;
  font-size: 6px;
  font-weight: normal;
}

.panel h2 i {
  width: 6px;
  height: 6px;
  border: 1px solid #555;
}

.grid {
  flex: 1;
  min-height: 0;
  overflow: hidden;
  background: repeating-linear-gradient(#fff 0 8px, #f1f1f1 8px 9px, #f9f9f9 9px 17px, #f1f1f1 17px 18px);
}

table {
  width: 100%;
  height: 100%;
  table-layout: fixed;
  border-collapse: separate;
  border-spacing: 0;
}

th,
td {
  height: 9px;
  padding: 0 0 0 2px;
  border-right: 1px solid #ececec;
  overflow: hidden;
  text-align: left;
  font-weight: normal;
  line-height: 8px;
  white-space: nowrap;
}

th {
  background: #ebebeb;
  border-right-color: #ddd;
}

.name {
  width: 90px;
  padding-left: 1px;
}

td.name {
  border-right-color: #444;
}

.time {
  width: 10px;
  padding-left: 0;
  font-size: 5px;
}

.rest td {
  height: auto;
}

.name svg {
  width: 7px;
  height: 7px;
  display: inline-block;
  margin-right: 1px;
  vertical-align: middle;
}

.name.lv1,
.name.lv2 {
  padding-left: 8px;
}

.scroll {
  height: 11px;
  flex: none;
  display: flex;
  align-items: center;
  border-bottom: 2px solid #c9c9c9;
  background: #f0f0f0;
}

.scroll button {
  width: 8px;
  line-height: 8px;
}

.scroll button:last-child {
  margin-left: auto;
}

.thumb {
  width: 65%;
  height: 7px;
  border: 1px solid #b5b5b5;
  background: linear-gradient(#888, #888) no-repeat center / 4px 3px, linear-gradient(#eee, #ccc);
}

.panel .fold {
  height: 11px;
  flex: none;
  display: flex;
  align-items: center;
  justify-content: space-between;
  padding: 0 2px 0 1px;
  border-bottom: 1px solid #8fc3d4;
  color: #2f86a3;
}

.fold svg {
  width: 6px;
  height: 6px;
}

.resource {
  width: 15px;
  flex: none;
  display: flex;
  flex-direction: column;
  background: #d6d6d6;
}

.resource button {
  height: 19px;
  flex: none;
  display: flex;
  align-items: center;
  justify-content: center;
}

.resource svg {
  width: 12px;
  height: 12px;
}

.resource .gear {
  height: 12px;
  margin-bottom: 7px;
}

.resource .gear svg {
  width: 8px;
  height: 8px;
}

.resource .current {
  background: #fff;
}

.resource .tall {
  height: 24px;
}

.status {
  height: 10px;
  flex: none;
  display: flex;
  justify-content: flex-end;
  align-items: center;
  padding-right: 25px;
  border-top: 1px solid #ddd;
}

.status svg {
  width: 7px;
  height: 7px;
}

/* taskbar */
.taskbar {
  height: 18px;
  flex: none;
  display: flex;
  align-items: center;
  gap: 1px;
  background: #8194ad;
  color: #fff;
}

.orb {
  width: 26px;
  padding-left: 4px;
}

.orb svg {
  width: 16px;
  height: 16px;
}

.task {
  width: 72px;
  height: 18px;
  display: flex;
  align-items: center;
  gap: 3px;
  padding-left: 3px;
  border: 1px solid #667a94;
  border-radius: 2px;
  background: linear-gradient(#a2b1c4, #8799b1);
  white-space: nowrap;
  overflow: hidden;
}

.task.active {
  background: linear-gradient(#c3ced9, #a9b8c9);
}

.task svg {
  width: 14px;
  height: 14px;
}

.tray {
  display: flex;
  align-items: center;
  gap: 3px;
  margin-left: auto;
}

.tray svg {
  width: 8px;
  height: 8px;
}

.taskbar time {
  width: 54px;
  text-align: center;
  line-height: 8px;
  white-space: nowrap;
}

.desktop {
  width: 6px;
  height: 18px;
  border-left: 1px solid #5d7089;
  background: #6f849e;
}

/* floating screen recorder */
.recorder {
  position: absolute;
  top: 16px;
  right: 0;
  width: 141px;
  height: 16px;
  display: flex;
  align-items: center;
  justify-content: space-between;
  padding-left: 6px;
  background: #20232c;
  color: #85888e;
  font-size: 8px;
}

.recorder svg {
  width: 7px;
  height: 7px;
}

.recorder .brush {
  width: 16px;
  height: 16px;
  display: flex;
  align-items: center;
  justify-content: center;
  background: #1d2b4d;
}

.tip {
  position: absolute;
  top: 0;
  right: 0;
  width: 59px;
  height: 13px;
  border-radius: 2px;
  background: #139cf3;
  color: #fff;
  font-size: 7px;
  line-height: 13px;
  text-align: center;
}
```
